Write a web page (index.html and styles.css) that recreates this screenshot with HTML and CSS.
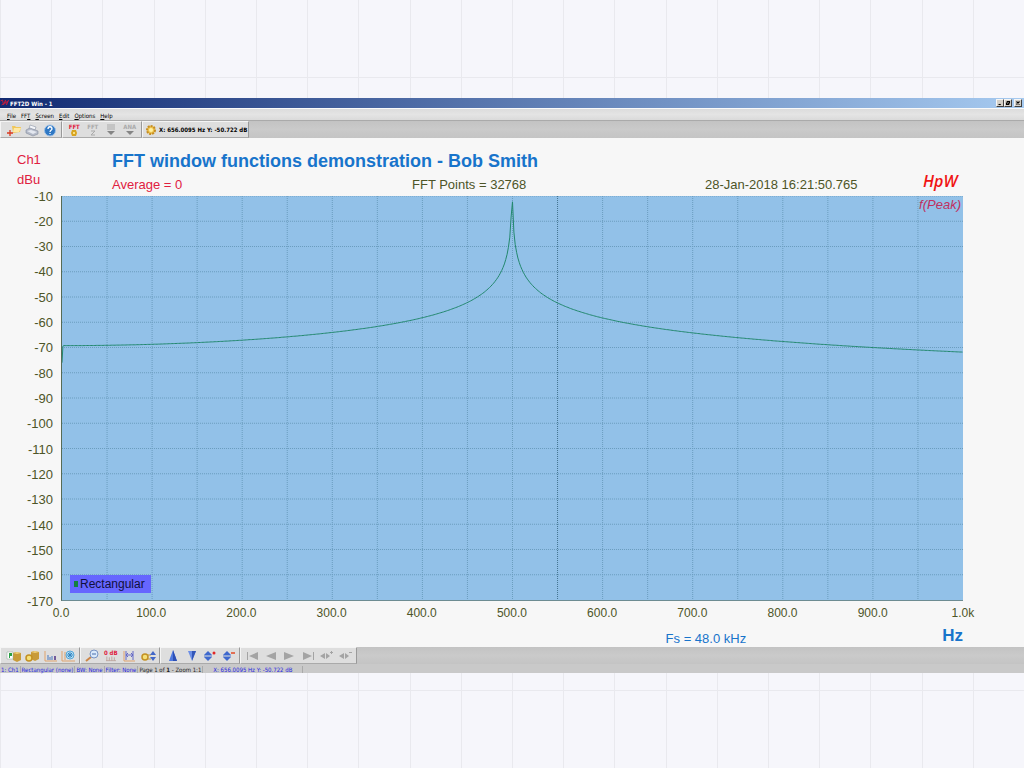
FILE: index.html
```
<!DOCTYPE html>
<html lang="en">
<head>
    <meta charset="UTF-8">
    <meta name="viewport" content="width=device-width, initial-scale=1.0">
    <title>FFT2D Win - 1</title>
    <link rel="stylesheet" href="styles.css">
</head>
<body>
    <div class="window">
        <header class="titlebar">
            <svg class="app-icon" viewBox="0 0 9 8"><path d="M0 2L2 1L3 6L5 1L6 6L8 1M1 6L8 2" /></svg>
            <span class="titlebar-text">FFT2D Win - 1</span>
            <button class="win-btn" aria-label="Minimize"><svg viewBox="0 0 8 8"><path d="M2 6H5" /></svg></button>
            <button class="win-btn" aria-label="Restore"><svg viewBox="0 0 8 8"><path d="M3 3V2H6V4H5M2 4H5V6H2Z" /></svg></button>
            <button class="win-btn win-close" aria-label="Close"><svg viewBox="0 0 8 8"><path d="M2 2L6 6M6 2L2 6" /></svg></button>
        </header>

        <nav class="menubar">
            <button><u>F</u>ile</button>
            <button>FF<u>T</u></button>
            <button><u>S</u>creen</button>
            <button><u>E</u>dit</button>
            <button><u>O</u>ptions</button>
            <button><u>H</u>elp</button>
        </nav>

        <div class="toolbar">
            <div class="group group-file">
                <button aria-label="Open"><svg viewBox="0 0 16 14"><path fill="#f0c75a" d="M6 3H9L10 4H15L14 9L7 10Z" /><path fill="#ffe9a5" d="M8 5H15L13 9H7Z" /><path stroke="#d93a20" stroke-width="1.3" d="M1 10H7M4 7V13" /></svg></button>
                <button aria-label="Print"><svg viewBox="0 0 16 14"><path fill="#f4f6fa" stroke="#8b93a5" stroke-width=".6" d="M6 2L12 4L11 7L5 6Z" /><path fill="#b4bac8" stroke="#858d9d" stroke-width=".6" d="M2 7L6 5L14 8V11L9 13L2 10Z" /><path fill="#e4e8f0" d="M3 8L9 11L13 9L7 7Z" /></svg></button>
                <button aria-label="Help"><svg viewBox="0 0 16 14"><circle cx="8" cy="7.500" r="5.500" fill="#2f78c4" stroke="#9fc1e6" /><path fill="none" stroke="#fff" stroke-width="1.300" d="M6 6C6 3 10 3 10 6C10 7 8 7 8 9M8 10V11" /></svg></button>
            </div>
            <div class="group">
                <button class="tool-text red">FFT<svg viewBox="0 0 8 6"><path fill="#d9a520" d="M2 0H6L7 3L6 6H2L1 3Z" /><circle cx="4" cy="3" r="1" fill="#fff3a8" /></svg></button>
                <button class="tool-text" disabled>FFT<svg viewBox="0 0 8 6"><path fill="none" stroke="#aaa" d="M2 1H6L2 5H6" /></svg></button>
                <button aria-label="Lines" disabled><svg viewBox="0 0 16 14"><path stroke="#aaa" d="M4 2H12M4 4H12M4 6H12" /><path fill="#858585" d="M4 8H12L8 12Z" /></svg></button>
                <button class="tool-text" disabled>ANA<svg viewBox="0 0 8 6"><path fill="#858585" d="M0 1H8L4 5Z" /></svg></button>
            </div>
            <div class="group readout">
                <svg viewBox="0 0 16 14"><circle cx="8" cy="7" r="4" stroke="#c58d21" stroke-width="2" stroke-dasharray="2 1" fill="#edc14c" /><circle cx="8" cy="7" r="2" fill="#fff0a0" /></svg>
                <span>X: 656.0095 Hz Y: -50.722 dB</span>
            </div>
        </div>

        <main class="chart">
            <div class="chart-head">
                <div class="channel">Ch1<br>dBu</div>
                <div>
                    <h1>FFT window functions demonstration - Bob Smith</h1>
                    <div class="info">
                        <span class="red">Average = 0</span>
                        <span>FFT Points = 32768</span>
                        <span>28-Jan-2018 16:21:50.765</span>
                        <span class="brand">HpW</span>
                    </div>
                </div>
            </div>
            <div class="chart-body">
                <div class="y-axis" id="y-axis"></div>
                <div class="plot">
                    <svg id="plot" viewBox="0 0 902 404" preserveAspectRatio="none"></svg>
                    <span class="peak">f(Peak)</span>
                    <span class="legend"><i></i>Rectangular</span>
                </div>
            </div>
            <div class="x-axis" id="x-axis"></div>
            <div class="chart-foot">
                <span>Fs = 48.0 kHz</span>
                <strong>Hz</strong>
            </div>
        </main>

        <div class="toolbar toolbar-bottom">
            <div class="group">
                <button aria-label="Play data"><svg viewBox="0 0 16 14"><path fill="#c89b39" d="M7 4L10 3L15 4V11L11 13L7 11Z" /><path fill="#efcf77" d="M7 4L11 5L15 4L11 3Z" /><path fill="#fff" stroke="#8fa596" stroke-width=".5" d="M1 3H7V10H1Z" /><path fill="#2aa044" d="M3 4H6V7H4V9H3Z" /></svg></button>
                <button aria-label="Data settings"><svg viewBox="0 0 16 14"><path fill="#c89b39" d="M7 3L10 2L15 3V10L11 12L7 10Z" /><path fill="#efcf77" d="M7 3L11 4L15 3L11 2Z" /><circle cx="5" cy="9" r="3" fill="#f5df77" stroke="#c39022" stroke-width="1.5" /></svg></button>
                <button aria-label="Spectrum"><svg viewBox="0 0 16 14"><path fill="none" stroke="#e0a36d" d="M3 2V12H15" /><path stroke="#4777be" d="M6 6V11M8 8V11M10 7V11" /><path stroke="#4d2f83" stroke-width="1.500" d="M13 7V11" /></svg></button>
                <button aria-label="Spectrum settings"><svg viewBox="0 0 16 14"><path fill="none" stroke="#e0a36d" d="M2 2V12H15M5 3V11" /><circle cx="10" cy="6" r="4" fill="#b8e2f7" stroke="#55a5d6" /><path stroke="#3284c0" d="M10 3V9M7 6H13M8 4L12 8M12 4L8 8" /></svg></button>
            </div>
            <div class="group">
                <button aria-label="Zoom"><svg viewBox="0 0 16 14"><path stroke="#cc8648" stroke-width="2" d="M2 12L7 8" /><circle cx="10" cy="5" r="4" fill="#d9e9fa" stroke="#7994c3" /><path stroke="#496cad" d="M8 5H12" /></svg></button>
                <button class="tool-text red">0 dB<svg viewBox="0 0 12 6"><path stroke="#baa098" d="M1 0V5M4 1V5M7 0V5M10 1V5M0 5H12" /></svg></button>
                <button aria-label="Cursor"><svg viewBox="0 0 16 14"><path stroke="#e0a36d" d="M3 2V12H14" fill="none" /><path fill="none" stroke="#6268c6" d="M5 2V11M12 2V11M5 6H12M7 4L5 6L7 8M10 4L12 6L10 8" /></svg></button>
                <button aria-label="Scale settings"><svg viewBox="0 0 16 14"><circle cx="5" cy="8" r="3" fill="#f5df77" stroke="#c39022" stroke-width="1.500" /><path stroke="#c49a38" d="M7 6H11M8 10H11" /><path fill="#4267c7" d="M10 6L13 2L16 6ZM10 8H16L13 12Z" /></svg></button>
            </div>
            <div class="group">
                <button aria-label="Up"><svg viewBox="0 0 16 14"><path fill="#4f79e0" d="M9 1L13 12H5Z" /><path fill="#2c4fb5" d="M9 1L13 12H9Z" /></svg></button>
                <button aria-label="Down"><svg viewBox="0 0 16 14"><path fill="#6b8ee6" d="M5 2H13L9 12Z" /><path fill="#3457b8" d="M9 2H13L9 12Z" /></svg></button>
                <button aria-label="Expand"><svg viewBox="0 0 16 14"><path fill="#3f69ce" d="M3 6L7 2L11 6ZM3 8H11L7 12Z" /><path stroke="#4772d0" d="M3 7H11" /><circle cx="13" cy="4" r="1.500" fill="#e32626" /></svg></button>
                <button aria-label="Compress"><svg viewBox="0 0 16 14"><path fill="#3f69ce" d="M3 6L7 2L11 6ZM3 8H11L7 12Z" /><path stroke="#4772d0" d="M3 7H11" /><path stroke="#e34a26" stroke-width="1.500" d="M11 4H15" /></svg></button>
            </div>
            <div class="group nav">
                <button aria-label="First" disabled><svg viewBox="0 0 16 14"><path d="M3 3H4V11H3ZM5 7L14 3V11Z" /></svg></button>
                <button aria-label="Previous" disabled><svg viewBox="0 0 16 14"><path d="M3 7L13 3V11Z" /></svg></button>
                <button aria-label="Next" disabled><svg viewBox="0 0 16 14"><path d="M13 7L3 3V11Z" /></svg></button>
                <button aria-label="Last" disabled><svg viewBox="0 0 16 14"><path d="M13 3H14V11H13ZM12 7L3 3V11Z" /></svg></button>
                <button aria-label="Widen" disabled><svg viewBox="0 0 16 14"><path d="M2 7L7 4V10ZM8 4L12 7L8 10ZM12 3H15V4H12ZM13 2H14V5H13Z" /></svg></button>
                <button aria-label="Narrow" disabled><svg viewBox="0 0 16 14"><path d="M2 7L7 4V10ZM8 4L12 7L8 10ZM12 3H15V4H12Z" /></svg></button>
            </div>
        </div>

        <footer class="status">
            <span>1: Ch1</span>
            <span>Rectangular (none)</span>
            <span>BW: None</span>
            <span>Filter: None</span>
            <span class="dark">Page 1 of <b>1</b> - Zoom 1:1</span>
            <span class="position">X: 656.0095 Hz Y: -50.722 dB</span>
        </footer>
    </div>

    <script>
        const plot = document.getElementById("plot");
        const yAxis = document.getElementById("y-axis");
        const xAxis = document.getElementById("x-axis");

        const width = 902;
        const height = 404;
        const tone = 499.5;

        // leakage of a rectangular window around the tone, in dBu
        function level(hz) {
            const near = 1 / Math.pow(hz - tone, 2);
            const image = 1 / Math.pow(hz + tone, 2);
            return Math.min(-11.5, -18.3 + 10 * Math.log10(near + image));
        }

        function point(hz, db) {
            return `${(hz * width / 1000).toFixed(1)},${((-10 - db) * height / 160).toFixed(1)}`;
        }

        let svg = "";
        for (let i = 1; i < 20; i++) {
            const x = width / 20 * i;
            svg += `<path class="${i === 11 ? "line strong" : "line"}" d="M${x} 0V${height}" />`;
        }
        for (let i = 0; i < 16; i++) {
            const y = height / 16 * i;
            svg += `<path class="line" d="M0 ${y}H${width}" />`;
        }

        const curve = [point(0, -76), point(1, -69.5)];
        for (let hz = 2; hz <= 1000; hz += 1.5) {
            curve.push(point(hz, level(hz)));
        }
        svg += `<polyline class="curve" points="${curve.join(" ")}" />`;
        plot.innerHTML = svg;

        for (let db = -10; db >= -170; db -= 10) {
            yAxis.innerHTML += `<span>${db}</span>`;
        }
        for (let hz = 0; hz <= 1000; hz += 100) {
            xAxis.innerHTML += `<span>${hz < 1000 ? hz.toFixed(1) : "1.0k"}</span>`;
        }
    </script>
</body>
</html>
```
FILE: styles.css
```
* {
    box-sizing: border-box;
}
body {
    margin: 0;
    padding: 98px 0;
    font-family: "Liberation Sans", Arial, sans-serif;
    font-size: 13px;
    background-color: #f6f6fb;
    background-image:
        linear-gradient(#e9e9ee, #e9e9ee),
        linear-gradient(#e9e9ee, #e9e9ee),
        repeating-linear-gradient(90deg, #e9e9ee 0, #e9e9ee 1px, transparent 1px, transparent 5%);
    background-size: 100% 1px, 100% 1px, 100% 100%;
    background-position: 0 77px, 0 690px, 0 0;
    background-repeat: no-repeat;
    overflow: hidden;
}
button {
    padding: 0;
    border: none;
    background: none;
    font-family: inherit;
    font-size: inherit;
    color: inherit;
}
.red {
    color: #e0203f;
}

/* window frame */
.window {
    font-family: "DejaVu Sans Condensed", "DejaVu Sans", sans-serif;
    font-size: 6px;
    background: #f7f7f7;
}
.titlebar {
    display: flex;
    align-items: center;
    height: 10px;
    padding: 0 2px 0 0;
    color: #fff;
    font-weight: bold;
    background: linear-gradient(90deg, #112a72, #a6caf0);
}
.app-icon {
    width: 10px;
    height: 8px;
    fill: none;
    stroke: #b51c40;
}
.titlebar-text {
    flex: 1;
}
.win-btn {
    display: flex;
    width: 8px;
    height: 8px;
    background: #d4d0c8;
    border: 1px solid #f5f5f5;
    border-right-color: #404040;
    border-bottom-color: #404040;
}
.win-btn svg {
    width: 100%;
    height: 100%;
    fill: none;
    stroke: #000;
    stroke-width: 1.5;
}
.win-close {
    margin-left: 2px;
}
.menubar {
    display: flex;
    align-items: center;
    gap: 5px;
    height: 13px;
    padding: 1px 0 0 7px;
    border-top: 1px solid #fafafa;
    border-bottom: 1px solid #aaa;
    background: linear-gradient(#dcdcdc, #e4e4e4, #dadada);
}
.menubar u {
    text-decoration-thickness: 1px;
}

/* toolbars */
.toolbar {
    display: flex;
    height: 17px;
    background: linear-gradient(#c3c3c3, #cacaca, #c4c4c4);
}
.group {
    display: flex;
    align-items: center;
    justify-content: space-around;
    width: 80px;
    padding: 0 2px;
    background: #dedede;
    border: 1px solid #f4f4f4;
    border-right-color: #999;
    border-bottom-color: #aaa;
}
.group:first-child {
    padding-left: 4px;
}
.group.group-file {
    width: 62px;
}
.group button {
    display: flex;
    flex-direction: column;
    align-items: center;
    width: 16px;
}
.group svg {
    width: 16px;
    height: 14px;
    fill: none;
}
.tool-text {
    font-size: 6px;
    font-weight: bold;
    line-height: 6px;
}
.tool-text:disabled {
    color: #aaa;
}
.group .tool-text svg {
    width: 10px;
    height: 6px;
}
.group.readout {
    width: auto;
    padding: 0 1px 0 0;
    font-weight: bold;
}
.group.nav {
    width: 117px;
}
.nav path {
    fill: #a4a4a4;
}

/* chart */
.chart {
    font-family: "Liberation Sans", Arial, sans-serif;
    font-size: 13px;
    color: #4d5527;
}
.chart-head {
    display: grid;
    grid-template-columns: 95px 1fr;
    height: 58px;
    padding: 12px 0 0 17px;
}
.channel {
    line-height: 20px;
    color: #e0203f;
}
h1 {
    margin: 0;
    font-size: 18px;
    line-height: 22px;
    color: #1874cb;
}
.info {
    display: grid;
    grid-template-columns: 300fr 293fr 218fr 101fr;
    align-items: center;
    line-height: 26px;
}
.brand {
    font-family: "Open Sans", sans-serif;
    font-size: 16px;
    font-style: italic;
    font-weight: 600;
    line-height: 18px;
    color: #f01414;
    padding-bottom: 8px;
}
.chart-body {
    display: grid;
    grid-template-columns: 53px 1fr;
    column-gap: 8px;
    height: 405px;
    padding-right: 61px;
}
.y-axis,
.x-axis {
    display: flex;
    justify-content: space-between;
}
.y-axis {
    flex-direction: column;
    text-align: right;
}
.y-axis span {
    display: flex;
    align-items: center;
    justify-content: flex-end;
    height: 0;
}
.plot {
    position: relative;
    background: #92c1e8;
    border-left: 1px solid #566b55;
    border-bottom: 1px solid #6d8c92;
}
.plot > svg {
    display: block;
    width: 100%;
    height: 404px;
}
.line {
    fill: none;
    stroke: #6b9dbe;
    stroke-dasharray: 1 1;
    vector-effect: non-scaling-stroke;
}
.strong {
    stroke: #42738e;
}
.curve {
    fill: none;
    stroke: #22886e;
    vector-effect: non-scaling-stroke;
}
.peak {
    position: absolute;
    top: 0;
    right: 2px;
    font-style: italic;
    line-height: 18px;
    color: #c03060;
}
.legend {
    position: absolute;
    left: 8px;
    bottom: 7px;
    display: flex;
    align-items: center;
    gap: 2px;
    padding: 0 6px 0 4px;
    font-size: 12px;
    line-height: 18px;
    color: #10103c;
    background: #6666ff;
}
.legend i {
    width: 4px;
    height: 6px;
    background: #148040;
}
.x-axis {
    padding: 0 61px;
    font-size: 12px;
    line-height: 24px;
}
.x-axis span {
    display: flex;
    justify-content: center;
    width: 0;
}
.chart-foot {
    display: flex;
    justify-content: space-between;
    align-items: center;
    height: 22px;
    padding: 0 61px 0 65%;
    color: #1874cb;
}
.chart-foot span {
    padding-top: 4px;
}
.chart-foot strong {
    font-size: 17px;
}

/* status bar */
.status {
    display: flex;
    align-items: center;
    height: 9px;
    padding-top: 1px;
    color: #2222e0;
    background: #c9c9c9;
}
.status span {
    padding: 0 1px;
    border-right: 1px solid #aaa;
}
.status .dark {
    color: #222;
}
.status .position {
    padding: 0 10px;
}
```
